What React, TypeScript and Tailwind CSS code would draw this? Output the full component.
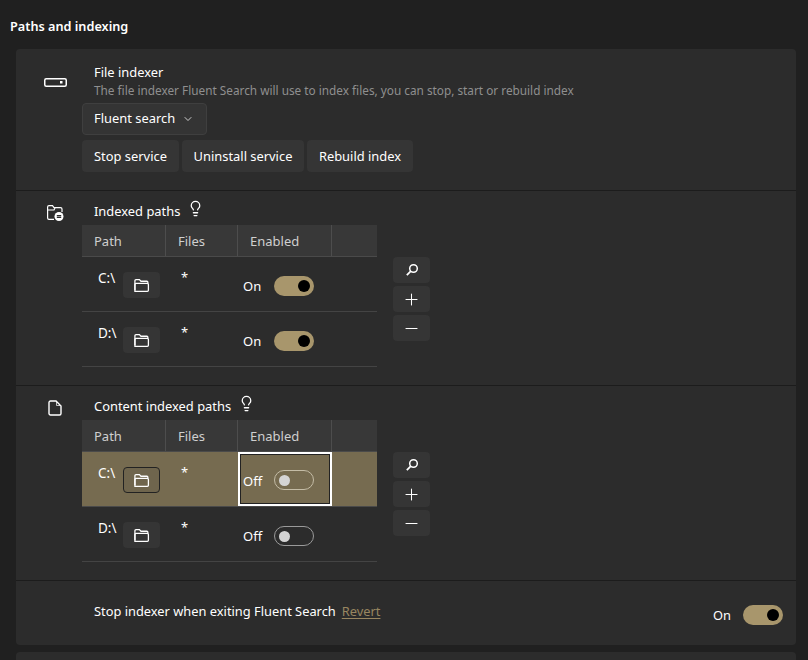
import { ChevronDown, Lightbulb, Minus, Plus } from "lucide-react";

const FolderIcon = () => (
  <svg width="17" height="17" viewBox="0 0 16 16" fill="none" stroke="#fff" strokeWidth="1.2">
    <path d="M1.8 12.5V3.5C1.8 2.9 2.2 2.5 2.8 2.5H6L7.5 4H13C13.6 4 14 4.4 14 5V6" />
    <path d="M1.8 13.5V7C1.8 6.4 2.2 6 2.8 6H13.5C14.2 6 14.5 6.4 14.5 7V12.5C14.5 13.1 14.1 13.5 13.5 13.5H1.8Z" />
  </svg>
);

const Toggle = ({ on, hover }: { on: boolean; hover?: boolean }) =>
  on ? (
    <div className="w-10 h-5 rounded-full bg-[#a8966c] flex items-center justify-end pr-1">
      <div className="w-3 h-3 rounded-full bg-black" />
    </div>
  ) : (
    <div
      className={`w-10 h-5 rounded-full border flex items-center pl-1 ${
        hover ? "border-[#c4bca6]" : "border-[#9a9a9a]"
      }`}
    >
      <div className="w-[11px] h-[11px] rounded-full bg-[#d4d4d4]" />
    </div>
  );

const SquareButton = ({ children }: { children: React.ReactNode }) => (
  <div className="w-[37px] h-[26px] rounded bg-[#353535] flex items-center justify-center text-white">
    {children}
  </div>
);

const Row = ({
  path,
  on,
  selected,
}: {
  path: string;
  on: boolean;
  selected?: boolean;
}) => (
  <div
    className={`grid grid-cols-[84px_72px_94px_45px] h-[55px] border-b ${
      selected ? "bg-[#766b50] border-[#4a4a4a]" : "border-[#444444]"
    }`}
  >
    <div className="flex pl-4 pt-[13px]">
      <span className="w-[25px] text-[13.5px] leading-[16px] text-white">{path}</span>
      <div
        className={`w-[37px] h-[26px] mt-[2px] rounded flex items-center justify-center ${
          selected ? "bg-[#6f654d] border border-[#222222]" : "bg-[#353535]"
        }`}
      >
        <FolderIcon />
      </div>
    </div>
    <div className="pl-[15px] pt-[12px] text-[13px] leading-[16px] text-white">*</div>
    <div
      className={`flex items-center ${
        selected
          ? "pl-[3px] pt-[2px] border-2 border-white outline outline-1 -outline-offset-3 outline-[#222222]"
          : "pl-[5px] pt-1"
      }`}
    >
      <span className={`w-[31px] text-[13px] text-white ${selected ? "pt-[3px]" : on ? "pt-[2px]" : "pt-[1px]"}`}>
        {on ? "On" : "Off"}
      </span>
      <Toggle on={on} hover={selected} />
    </div>
    <div />
  </div>
);

const PathTable = ({
  rows,
}: {
  rows: { path: string; on: boolean; selected?: boolean }[];
}) => (
  <div className="flex">
    <div className="w-[295px]">
      <div className="grid grid-cols-[84px_72px_94px_45px] h-8 bg-[#383838] border-b border-[#4a4a4a] text-[13px] text-[#cfcfcf]">
        <div className="pl-3 pt-[2px] flex items-center border-r border-[#4d4d4d]">Path</div>
        <div className="pl-3 pt-[2px] flex items-center border-r border-[#4d4d4d]">Files</div>
        <div className="pl-3 pt-[2px] flex items-center border-r border-[#4d4d4d]">Enabled</div>
        <div />
      </div>
      {rows.map((r) => (
        <Row key={r.path} {...r} />
      ))}
    </div>
    <div className="ml-4 pt-8 flex flex-col gap-[3px]">
      <SquareButton>
        <svg width="16" height="16" viewBox="0 0 16 16" fill="none" stroke="#fff" strokeWidth="1.5">
          <circle cx="9.5" cy="6.5" r="3.8" />
          <path d="M6.8 9.2L2.8 13.2" strokeWidth="1.8" />
        </svg>
      </SquareButton>
      <SquareButton>
        <Plus size={19} strokeWidth={1.3} />
      </SquareButton>
      <SquareButton>
        <Minus size={19} strokeWidth={1.3} />
      </SquareButton>
    </div>
  </div>
);

const PathSection = ({
  icon,
  title,
  rows,
}: {
  icon: React.ReactNode;
  title: string;
  rows: { path: string; on: boolean; selected?: boolean }[];
}) => (
  <div className="h-[195px] border-b border-[#1c1c1c] flex">
    <div className="w-[66px] pt-[14px] pl-[31px]">{icon}</div>
    <div>
      <div className="h-[34px] pl-3 flex items-center gap-[7px] pt-[7px] text-[12.9px] text-white">
        {title}
        <Lightbulb size={17} strokeWidth={1.8} className="-mt-[7px]" />
      </div>
      <PathTable rows={rows} />
    </div>
  </div>
);

export default function App() {
  return (
    <div
      className="w-[808px] h-[660px] overflow-hidden bg-[#202020] text-white"
      style={{ fontFamily: '"Noto Sans", sans-serif' }}
    >
      <div className="h-[49px] pl-[10px] pt-[16px] text-[12.7px] leading-5 font-semibold">Paths and indexing</div>
      <div className="ml-4 w-[780px] h-[596px] rounded bg-[#2c2c2c]">
        <div className="h-[142px] border-b border-[#1c1c1c] flex">
          <div className="w-[66px] pt-[29px] pl-[28px]">
            <svg width="23" height="9" viewBox="0 0 23 9" fill="none">
              <rect x="0.75" y="0.75" width="21.5" height="7.5" rx="1.5" stroke="#fff" strokeWidth="1.5" />
              <rect x="16" y="3" width="2.5" height="2.5" fill="#fff" />
            </svg>
          </div>
          <div className="pt-[14px]">
            <div className="pl-3 text-[12.9px] leading-[18px] text-white">File indexer</div>
            <div className="pl-3 text-[11.8px] leading-[18px] text-[#8f8f8f] whitespace-nowrap">
              The file indexer Fluent Search will use to index files, you can stop, start or rebuild index
            </div>
            <div className="mt-1 w-[125px] h-8 rounded border border-[#3f3f3f] bg-[#343434] pl-[11px] flex items-center gap-[7px] text-[12.9px]">
              Fluent search
              <ChevronDown size={12} strokeWidth={1.5} />
            </div>
            <div className="mt-[5px] flex gap-[3px] text-[12.9px]">
              <div className="w-[97px] h-8 pt-[2px] rounded bg-[#353535] flex items-center justify-center">Stop service</div>
              <div className="w-[122px] h-8 pt-[2px] rounded bg-[#353535] flex items-center justify-center">Uninstall service</div>
              <div className="w-[106px] h-8 pt-[2px] rounded bg-[#353535] flex items-center justify-center">Rebuild index</div>
            </div>
          </div>
        </div>
        <PathSection
          title="Indexed paths"
          icon={
            <svg width="17" height="16" viewBox="0 0 17 16" fill="none" stroke="#fff" strokeWidth="1.2">
              <path d="M7 14.4H2C1.2 14.4 0.6 13.8 0.6 13V2C0.6 1.2 1.2 0.6 2 0.6H5.5L7 2.6H13.5C14.4 2.6 15 3.2 15 4.1V7" />
              <path d="M0.6 5H7L8 3" />
              <circle cx="12" cy="11.5" r="4.5" fill="#fff" stroke="none" />
              <path d="M9.8 10.6H14.2M9.8 12.4H14.2" stroke="#2c2c2c" />
            </svg>
          }
          rows={[
            { path: "C:\\", on: true },
            { path: "D:\\", on: true },
          ]}
        />
        <PathSection
          title="Content indexed paths"
          icon={
            <svg width="14" height="16" viewBox="0 0 14 16" fill="none" stroke="#fff" strokeWidth="1.4" className="ml-[1px]">
              <path d="M2.5 1H8L13 6V13.5C13 14.3 12.4 15 11.5 15H2.5C1.7 15 1 14.3 1 13.5V2.5C1 1.7 1.7 1 2.5 1Z" />
              <path d="M8.5 1.5V5.5H12.5" strokeWidth="0.7" />
            </svg>
          }
          rows={[
            { path: "C:\\", on: false, selected: true },
            { path: "D:\\", on: false },
          ]}
        />
        <div className="h-[64px] flex items-center pl-[78px] pr-[13px] text-[12.85px]">
          <span className="-mt-[3px]">Stop indexer when exiting Fluent Search</span>
          <span className="ml-[6px] -mt-[3px] text-[#988660] underline underline-offset-2">Revert</span>
          <span className="ml-auto mr-[12px] mt-[5px]">On</span>
          <div className="mt-1">
            <Toggle on />
          </div>
        </div>
      </div>
      <div className="ml-4 mt-[7px] w-[780px] h-[20px] rounded bg-[#2c2c2c]" />
    </div>
  );
}
